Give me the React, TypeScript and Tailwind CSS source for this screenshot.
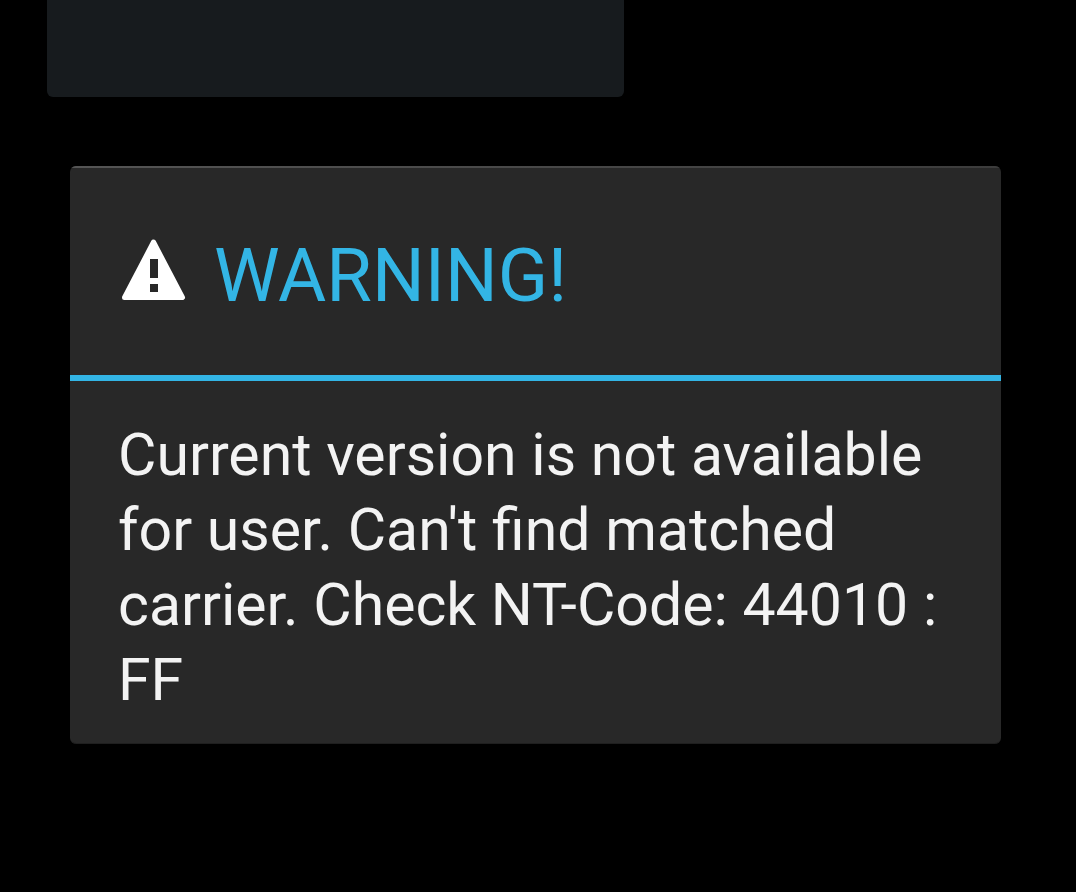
import { useId } from "react";

function WarningIcon() {
  return (
    <svg viewBox="0 0 64 62" className="h-[62px] w-16 shrink-0" fill="none" aria-hidden="true">
      <path
        d="M2.5 58.5 L31.5 3 L60.5 58.5 Z"
        fill="#fff"
        stroke="#fff"
        strokeWidth="5"
        strokeLinejoin="round"
      />
      <path d="M28 20h8v19h-8zM28 45h8v8h-8z" fill="#282828" />
    </svg>
  );
}

export default function App() {
  const titleId = useId();
  const messageId = useId();

  return (
    <div className="min-h-screen bg-black font-['Roboto',sans-serif]">
      <div className="ml-[47px] mr-[452px] h-[97px] rounded-b-md bg-[#171b1e]" />

      <main
        role="alertdialog"
        aria-labelledby={titleId}
        aria-describedby={messageId}
        className="ml-[70px] mr-[75px] mt-[69px] overflow-hidden rounded-md border-b border-[#1f1f1f] bg-[#282828]"
      >
        <div className="h-[2px] bg-linear-to-r from-[#555555] to-[#3c3c3c]" />
        <header className="flex h-[213px] items-center gap-[28px] border-b-6 border-[#33b5e5] pb-1 pl-[52px]">
          <WarningIcon />
          <h1 id={titleId} className="pt-3 text-[74px] leading-[94px] text-[#33b5e5]">
            WARNING!
          </h1>
        </header>
        <p
          id={messageId}
          className="px-12 pb-[26px] pt-[36px] text-[59px] leading-[75px] text-[#f3f3f3]"
        >
          Current version is not available for user. Can't find matched carrier. Check NT-Code:
          44010 : FF
        </p>
      </main>
    </div>
  );
}
